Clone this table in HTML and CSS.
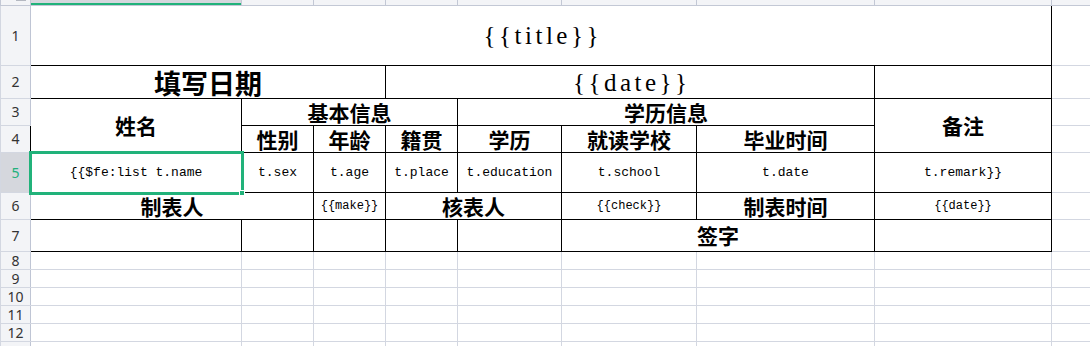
FILE: index.html
```html
<!DOCTYPE html>
<html lang="zh">
<head>
<meta charset="utf-8">
<title>sheet</title>
<link rel="stylesheet" href="styles.css">
</head>
<body>
<table class="sheet">
  <colgroup>
    <col class="c-hd"><col class="c-a"><col class="c-s"><col class="c-s"><col class="c-s"><col class="c-e"><col class="c-f"><col class="c-g"><col class="c-h"><col class="c-i">
  </colgroup>
  <tr class="r-hd">
    <th class="corner"><span class="corner-bar"></span></th>
    <th class="ch ch-sel"></th><th class="ch"></th><th class="ch"></th><th class="ch"></th><th class="ch"></th><th class="ch"></th><th class="ch"></th><th class="ch"></th><th class="ch"></th>
  </tr>
  <tr class="r1">
    <th class="rn">1</th>
    <td colspan="8" class="b title t1">{{title}}</td>
    <td></td>
  </tr>
  <tr class="r2">
    <th class="rn">2</th>
    <td colspan="3" class="b big">填写日期</td>
    <td colspan="4" class="b title">{{date}}</td>
    <td class="b"></td>
    <td></td>
  </tr>
  <tr class="r3">
    <th class="rn">3</th>
    <td rowspan="2" class="b hd">姓名</td>
    <td colspan="3" class="b hd">基本信息</td>
    <td colspan="3" class="b hd">学历信息</td>
    <td rowspan="2" class="b hd">备注</td>
    <td></td>
  </tr>
  <tr class="r4">
    <th class="rn">4</th>
    <td class="b hd">性别</td>
    <td class="b hd">年龄</td>
    <td class="b hd">籍贯</td>
    <td class="b hd">学历</td>
    <td class="b hd">就读学校</td>
    <td class="b hd">毕业时间</td>
    <td></td>
  </tr>
  <tr class="r5">
    <th class="rn rn-sel">5</th>
    <td class="b dt sel">{{$fe:list t.name<span class="handle"></span></td>
    <td class="b dt">t.sex</td>
    <td class="b dt">t.age</td>
    <td class="b dt">t.place</td>
    <td class="b dt">t.education</td>
    <td class="b dt">t.school</td>
    <td class="b dt">t.date</td>
    <td class="b dt">t.remark}}</td>
    <td></td>
  </tr>
  <tr class="r6">
    <th class="rn">6</th>
    <td colspan="2" class="b hd">制表人</td>
    <td class="b sm">{{make}}</td>
    <td colspan="2" class="b hd">核表人</td>
    <td class="b sm">{{check}}</td>
    <td class="b hd">制表时间</td>
    <td class="b sm">{{date}}</td>
    <td></td>
  </tr>
  <tr class="r7">
    <th class="rn">7</th>
    <td class="b"></td><td class="b"></td><td class="b"></td><td class="b"></td><td class="b"></td>
    <td colspan="2" class="b hd">签字</td>
    <td class="b"></td>
    <td></td>
  </tr>
  <tr class="rs"><th class="rn">8</th><td></td><td></td><td></td><td></td><td></td><td></td><td></td><td></td><td></td></tr>
  <tr class="rs"><th class="rn">9</th><td></td><td></td><td></td><td></td><td></td><td></td><td></td><td></td><td></td></tr>
  <tr class="rs"><th class="rn">10</th><td></td><td></td><td></td><td></td><td></td><td></td><td></td><td></td><td></td></tr>
  <tr class="rs"><th class="rn">11</th><td></td><td></td><td></td><td></td><td></td><td></td><td></td><td></td><td></td></tr>
  <tr class="rs"><th class="rn">12</th><td></td><td></td><td></td><td></td><td></td><td></td><td></td><td></td><td></td></tr>
  <tr class="rs"><th class="rn">13</th><td></td><td></td><td></td><td></td><td></td><td></td><td></td><td></td><td></td></tr>
</table>
</body>
</html>
```
FILE: styles.css
```css
html, body {
  margin: 0;
  padding: 0;
  background: #ffffff;
  overflow: hidden;
  width: 1090px;
  height: 346px;
}

.sheet {
  table-layout: fixed;
  border-collapse: collapse;
  width: 1090px;
  font-family: "Noto Sans CJK SC", "Noto Sans", sans-serif;
  color: #000;
}

.c-hd { width: 30px; }
.c-a { width: 211px; }
.c-s { width: 72px; }
.c-e { width: 104px; }
.c-f { width: 135px; }
.c-g { width: 178px; }
.c-h { width: 177px; }
.c-i { width: 39px; }

.sheet td,
.sheet th {
  padding: 0;
  border: 1px solid #d3d7e1;
  line-height: 1;
  text-align: center;
  vertical-align: middle;
  overflow: visible;
  white-space: nowrap;
}

.sheet td.b {
  border: 1px solid #000;
}

.r-hd { height: 5px; }
.r1 { height: 60px; }
.r2 { height: 33px; }
.r3 { height: 27px; }
.r4 { height: 27px; }
.r5 { height: 40px; }
.r6 { height: 27px; }
.r7 { height: 32px; }
.rs { height: 18px; }

.r-hd th {
  background: #f3f4f7;
  border-color: #c3c8d5;
  border-top: 0;
  height: 5px;
}

.r-hd .ch-sel {
  background: #d5d7dd;
  box-shadow: inset 0 -2px 0 #21b27a;
}

.corner {
  position: relative;
}

.corner-bar {
  position: absolute;
  left: 15px;
  top: 0;
  width: 10px;
  height: 1px;
  background: #b4b8c1;
}

.rn {
  background: #f3f4f7;
  border-color: #dde0e7;
  border-right: 1px solid #bfc5d4 !important;
  font-family: "Noto Sans", "Noto Sans CJK SC", sans-serif;
  font-weight: 400;
  font-size: 14px;
  color: #333;
}

.rn-sel {
  background: #d5d7dd;
  color: #22b07c;
}

.title {
  font-family: "Liberation Serif", serif;
  font-size: 25px;
  letter-spacing: 3.5px;
  text-indent: 3.5px;
}

.t1 {
  padding-top: 9px;
}

.big {
  font-size: 27px;
  font-weight: 700;
}

.hd {
  font-size: 21px;
  font-weight: 700;
}

.dt {
  font-family: "Liberation Mono", monospace;
  font-size: 13px;
  padding-top: 3px;
}

.sm {
  font-family: "Liberation Mono", monospace;
  font-size: 12px;
}

.sel {
  position: relative;
  outline: 3px solid #21b27a;
  outline-offset: -1px;
}

.handle {
  position: absolute;
  right: -4px;
  bottom: -4px;
  width: 6px;
  height: 6px;
  background: #21b27a;
  border: 1px solid #fff;
  box-sizing: border-box;
}
```
